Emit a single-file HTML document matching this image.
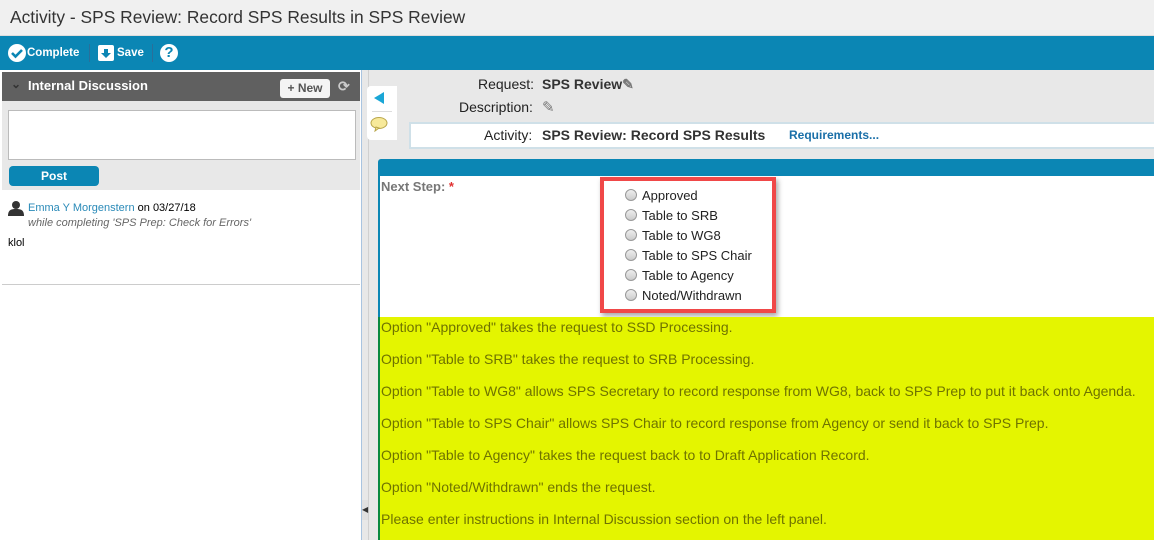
<!DOCTYPE html>
<html><head><style>
*{margin:0;padding:0;box-sizing:border-box}
body{width:1154px;height:540px;overflow:hidden;font-family:"Liberation Sans",Arial,sans-serif;background:#e8e8e8;position:relative}
.a{position:absolute}
.title{left:0;top:0;width:1154px;height:36px;background:#f0f0f0;border-bottom:1px solid #ddd;font-size:17.4px;color:#333;padding:7px 0 0 10px}
.tb{left:0;top:36px;width:1154px;height:34px;background:#0b86b4;color:#fff;font-weight:bold;font-size:11.5px}
.lp{left:0;top:70px;width:362px;height:470px;background:#fff;border-right:1px solid #a9c4e0}
.yl{left:379px;top:317px;width:773px;height:223px;background:#e4f500;color:#6f7300;font-size:14px}
.yl p{position:absolute;left:2px}
.radio{width:12px;height:12px;border-radius:50%;border:1px solid #999;background:linear-gradient(#eee,#ccc);display:inline-block;vertical-align:-1px;margin-right:5px}
</style></head><body>
<div class="a title">Activity - SPS Review: Record SPS Results in SPS Review</div>
<div class="a tb">
 <div class="a" style="left:8px;top:8px;width:18px;height:18px;border-radius:50%;background:#fff"><svg width="18" height="18"><path d="M4 9l3.5 3.5L14 6" stroke="#0b86b4" stroke-width="2.6" fill="none"/></svg></div>
 <div class="a" style="left:27px;top:11px">Complete</div>
 <div class="a" style="left:89px;top:8px;width:1px;height:18px;background:#2a6f9a"></div>
 <div class="a" style="left:98px;top:9px;width:16px;height:16px;background:#fff;border-radius:2px"><svg width="16" height="16"><path d="M6 4h4v4h3l-5 5-5-5h3z" fill="#0b86b4"/></svg></div>
 <div class="a" style="left:117px;top:11px">Save</div>
 <div class="a" style="left:152px;top:8px;width:1px;height:18px;background:#2a6f9a"></div>
 <div class="a" style="left:160px;top:8px;width:18px;height:18px;border-radius:50%;background:#fff;color:#0b86b4;font-size:15px;text-align:center;line-height:18px">?</div>
</div>
<div class="a lp">
 <div class="a" style="left:2px;top:2px;width:358px;height:29px;background:#606060;color:#fff;font-weight:bold;font-size:13px">
  <div class="a" style="left:9px;top:5px;color:#333;font-size:12px">&#8964;</div>
  <div class="a" style="left:26px;top:6px">Internal Discussion</div>
  <div class="a" style="left:278px;top:7px;width:50px;height:19px;background:#f4f4f4;border-radius:3px;color:#555;font-size:12px;text-align:center;line-height:19px">+ New</div>
  <div class="a" style="left:336px;top:6px;color:#ccc;font-size:14px">&#10227;</div>
 </div>
 <div class="a" style="left:2px;top:31px;width:358px;height:89px;background:#e8e8e8">
  <div class="a" style="left:6px;top:9px;width:348px;height:50px;background:#fff;border:1px solid #bbb"></div>
  <div class="a" style="left:7px;top:65px;width:90px;height:20px;background:#0b86b4;border-radius:4px;color:#fff;font-weight:bold;font-size:12px;text-align:center;line-height:20px">Post</div>
 </div>
 <svg class="a" style="left:8px;top:130px" width="16" height="16"><circle cx="8" cy="5" r="4" fill="#333"/><path d="M0 16c0-6 3-7 8-7s8 1 8 7z" fill="#333"/></svg>
 <div class="a" style="left:28px;top:132px;font-size:11px;color:#000"><span style="color:#2a8ab8">Emma Y Morgenstern</span> on 03/27/18</div>
 <div class="a" style="left:28px;top:147px;font-size:11px;color:#666;font-style:italic">while completing 'SPS Prep: Check for Errors'</div>
 <div class="a" style="left:8px;top:167px;font-size:11px">klol</div>
 <div class="a" style="left:2px;top:214px;width:358px;height:1px;background:#ccc"></div>
</div>
<div class="a" style="left:368px;top:70px;width:1px;height:470px;background:#d0d0d0"></div>
<div class="a" style="left:367px;top:86px;width:30px;height:54px;background:#fff;border-radius:4px 0 0 4px"></div>
<svg class="a" style="left:373px;top:91px" width="12" height="14"><path d="M11 1v12L1 7z" fill="#1aa6d6"/></svg>
<div class="a" style="left:372px;top:111px;width:20px;height:1px;background:#ddd"></div>
<svg class="a" style="left:370px;top:116px" width="18" height="16"><ellipse cx="9" cy="7" rx="8" ry="5.5" fill="#f7e99a" stroke="#b9a64a"/><path d="M6 11l-1 4 4-3z" fill="#f7e99a" stroke="#b9a64a"/></svg>
<div class="a" style="left:478px;top:76px;font-size:14px;color:#222">Request:</div>
<div class="a" style="left:542px;top:76px;font-size:14px;font-weight:bold;color:#333">SPS Review<span style="color:#777">&#9998;</span></div>
<div class="a" style="left:459px;top:99px;font-size:14px;color:#222">Description:</div>
<div class="a" style="left:542px;top:98px;font-size:15px;color:#777">&#9998;</div>
<div class="a" style="left:409px;top:122px;width:745px;height:27px;background:#fff;border:2px solid #cfe0e8;border-right:none"></div>
<div class="a" style="left:484px;top:127px;font-size:14px;color:#222">Activity:</div>
<div class="a" style="left:542px;top:127px;font-size:14px;font-weight:bold;color:#333">SPS Review: Record SPS Results</div>
<div class="a" style="left:789px;top:128px;font-size:12px;font-weight:bold;color:#1a6fa8">Requirements...</div>
<div class="a" style="left:378px;top:159px;width:776px;height:18px;background:#0b86b4;border-radius:3px 0 0 0"></div>
<div class="a" style="left:378px;top:176px;width:776px;height:141px;background:#fff;border-left:2px solid #0b86b4"></div>
<div class="a" style="left:381px;top:179px;font-size:13px;font-weight:bold;color:#777">Next Step: <span style="color:#e03030">*</span></div>
<div class="a" style="left:600px;top:177px;width:176px;height:136px;border:4px solid #f04848;box-shadow:2px 3px 5px rgba(0,0,0,.35);font-size:13px;color:#222;line-height:20px;padding:5px 0 0 21px">
 <div><span class="radio"></span>Approved</div>
 <div><span class="radio"></span>Table to SRB</div>
 <div><span class="radio"></span>Table to WG8</div>
 <div><span class="radio"></span>Table to SPS Chair</div>
 <div><span class="radio"></span>Table to Agency</div>
 <div><span class="radio"></span>Noted/Withdrawn</div>
</div>
<div class="a" style="left:378px;top:317px;width:2px;height:223px;background:#0b8a40"></div>
<div class="a yl" style="left:380px;width:774px">
 <p style="top:2px;left:1px">Option "Approved" takes the request to SSD Processing.</p>
 <p style="top:34px;left:1px">Option "Table to SRB" takes the request to SRB Processing.</p>
 <p style="top:66px;left:1px">Option "Table to WG8" allows SPS Secretary to record response from WG8, back to SPS Prep to put it back onto Agenda.</p>
 <p style="top:98px;left:1px">Option "Table to SPS Chair" allows SPS Chair to record response from Agency or send it back to SPS Prep.</p>
 <p style="top:130px;left:1px">Option "Table to Agency" takes the request back to to Draft Application Record.</p>
 <p style="top:162px;left:1px">Option "Noted/Withdrawn" ends the request.</p>
 <p style="top:194px;left:1px">Please enter instructions in Internal Discussion section on the left panel.</p>
</div>
<div class="a" style="left:362px;top:500px;width:6px;height:20px;background:#e0e0e0;font-size:8px;color:#333;line-height:20px">&#9664;</div>
</body></html>
